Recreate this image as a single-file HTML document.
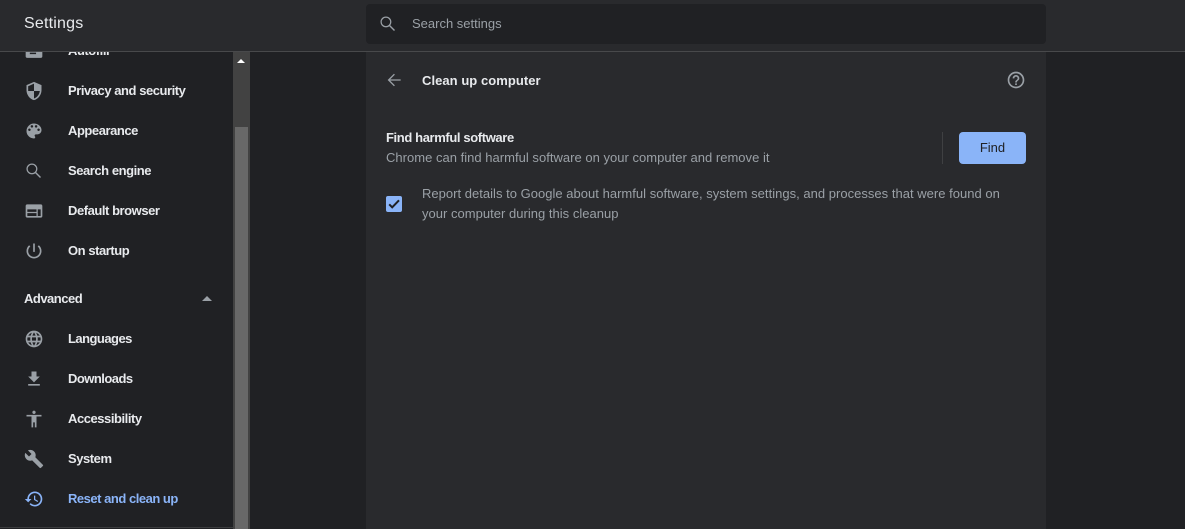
<!DOCTYPE html>
<html><head><meta charset="utf-8">
<style>
*{box-sizing:border-box}
html,body{margin:0;padding:0;width:1185px;height:529px;overflow:hidden;background:#202124;font-family:"Liberation Sans",sans-serif}
.a{position:absolute;white-space:nowrap}
.n{left:68px;font-size:13px;line-height:20px;font-weight:bold;color:#e8eaed;letter-spacing:-.45px}
svg.i{position:absolute;left:24px;width:20px;height:20px;fill:#9aa0a6}
</style></head><body>
<div class="a" style="left:366px;top:52px;width:680px;height:477px;background:#292a2d"></div>

<div class="a n" style="top:41px">Autofill</div>
<svg class="i" style="top:40px" viewBox="0 0 24 24"><path fill-rule="evenodd" d="M20 6h-4V4a2 2 0 0 0-2-2h-4a2 2 0 0 0-2 2v2H4a2 2 0 0 0-2 2v11.500a2 2 0 0 0 2 2h16a2 2 0 0 0 2-2V8a2 2 0 0 0-2-2zm-5.500 11H7v-1.800h7.500V17z"/></svg>

<svg class="i" style="top:81px" viewBox="0 0 24 24"><path d="M12 1L3 5v6c0 5.550 3.840 10.740 9 12 5.160-1.260 9-6.450 9-12V5l-9-4zm0 10.990h7c-.53 4.120-3.280 7.790-7 8.940V12H5V6.300l7-3.110v8.800z"/></svg>
<div class="a n" style="top:81px">Privacy and security</div>
<svg class="i" style="top:121px" viewBox="0 0 24 24"><path d="M12 3a9 9 0 0 0 0 18c.83 0 1.500-.67 1.500-1.500 0-.39-.15-.74-.39-1.010-.23-.26-.38-.61-.38-.99 0-.83.67-1.500 1.500-1.500H16c2.760 0 5-2.240 5-5 0-4.420-4.030-8-9-8zm-5.500 9c-.83 0-1.500-.67-1.500-1.500S5.670 9 6.500 9 8 9.670 8 10.500 7.330 12 6.500 12zm3-4C8.670 8 8 7.330 8 6.500S8.670 5 9.500 5s1.500.67 1.500 1.500S10.330 8 9.500 8zm5 0c-.83 0-1.500-.67-1.500-1.500S13.670 5 14.500 5s1.500.67 1.500 1.500S15.330 8 14.500 8zm3 4c-.83 0-1.500-.67-1.500-1.500S16.670 9 17.500 9s1.500.67 1.500 1.500-.67 1.500-1.500 1.500z"/></svg>
<div class="a n" style="top:121px">Appearance</div>
<svg class="i" style="top:161px;fill:none;stroke:#9aa0a6" viewBox="0 0 24 24"><circle cx="9.500" cy="9.500" r="5.800" stroke-width="1.500"/><path d="M13.800 13.800l6 6" stroke-width="1.700"/></svg>
<div class="a n" style="top:161px">Search engine</div>
<svg class="i" style="top:201px" viewBox="0 0 24 24"><path fill-rule="evenodd" d="M4 4h16a2 2 0 0 1 2 2v12a2 2 0 0 1-2 2H4a2 2 0 0 1-2-2V6a2 2 0 0 1 2-2zm0 6v3h11v-3H4zm0 4.500V18h11v-3.500H4zM16.500 10v8H20v-8h-3.500z"/></svg>
<div class="a n" style="top:201px">Default browser</div>
<svg class="i" style="top:241px" viewBox="0 0 24 24"><path d="M13 3h-2v10h2V3zm4.830 2.170l-1.420 1.420C17.990 7.860 19 9.810 19 12c0 3.870-3.130 7-7 7s-7-3.130-7-7c0-2.190 1.010-4.140 2.580-5.420L6.170 5.170C4.230 6.820 3 9.260 3 12c0 4.970 4.030 9 9 9s9-4.030 9-9c0-2.740-1.230-5.180-3.170-6.830z"/></svg>
<div class="a n" style="top:241px">On startup</div>

<div class="a n" style="left:24px;top:289px;letter-spacing:-.5px">Advanced</div>
<div class="a" style="left:202px;top:296px;width:0;height:0;border-left:5px solid transparent;border-right:5px solid transparent;border-bottom:5px solid #9aa0a6"></div>

<svg class="i" style="top:329px" viewBox="0 0 24 24"><path d="M11.990 2C6.470 2 2 6.480 2 12s4.470 10 9.990 10C17.520 22 22 17.520 22 12S17.520 2 11.990 2zm6.930 6h-2.950c-.32-1.250-.78-2.450-1.380-3.560 1.840.63 3.370 1.910 4.330 3.560zM12 4.040c.83 1.200 1.480 2.530 1.910 3.960h-3.820c.43-1.430 1.080-2.760 1.910-3.960zM4.260 14C4.100 13.360 4 12.690 4 12s.1-1.360.26-2h3.380c-.08.66-.14 1.320-.14 2 0 .68.06 1.340.14 2H4.260zm.82 2h2.950c.32 1.250.78 2.450 1.380 3.560-1.840-.63-3.370-1.900-4.330-3.560zm2.950-8H5.080c.96-1.660 2.490-2.930 4.330-3.560C8.810 5.550 8.350 6.750 8.030 8zM12 19.960c-.83-1.200-1.480-2.530-1.910-3.960h3.820c-.43 1.430-1.080 2.760-1.910 3.960zM14.340 14H9.660c-.09-.66-.16-1.320-.16-2 0-.68.07-1.350.16-2h4.680c.09.65.16 1.320.16 2 0 .68-.07 1.340-.16 2zm.25 5.560c.6-1.110 1.060-2.310 1.380-3.560h2.950c-.96 1.650-2.490 2.930-4.330 3.560zM16.360 14c.08-.66.14-1.320.14-2 0-.68-.06-1.340-.14-2h3.380c.16.64.26 1.310.26 2s-.1 1.360-.26 2h-3.380z"/></svg>
<div class="a n" style="top:329px;letter-spacing:-.53px">Languages</div>
<svg class="i" style="top:369px" viewBox="0 0 24 24"><path d="M19 9h-4V3H9v6H5l7 7 7-7zM5 18v2h14v-2H5z"/></svg>
<div class="a n" style="top:369px;letter-spacing:-.53px">Downloads</div>
<svg class="i" style="top:409px" viewBox="0 0 24 24"><path d="M12 2c1.100 0 2 .9 2 2s-.9 2-2 2-2-.9-2-2 .9-2 2-2zm9 7h-6v13h-2v-6h-2v6H9V9H3V7h18v2z"/></svg>
<div class="a n" style="top:409px">Accessibility</div>
<svg class="i" style="top:449px" viewBox="0 0 24 24"><path d="M22.700 19l-9.100-9.100c.9-2.300.4-5-1.500-6.900-2-2-5-2.400-7.400-1.300L9 6 6 9 1.600 4.700C.4 7.100.9 10.100 2.900 12.100c1.900 1.900 4.600 2.400 6.900 1.500l9.100 9.100c.4.4 1 .4 1.400 0l2.300-2.300c.5-.4.5-1.100.1-1.400z"/></svg>
<div class="a n" style="top:449px">System</div>
<svg class="i" style="top:489px;fill:#8ab4f8" viewBox="0 0 24 24"><path d="M13 3c-4.970 0-9 4.030-9 9H1l3.890 3.890.07.14L9 12H6c0-3.870 3.130-7 7-7s7 3.130 7 7-3.130 7-7 7c-1.930 0-3.680-.79-4.940-2.060l-1.420 1.420C8.270 19.990 10.510 21 13 21c4.970 0 9-4.030 9-9s-4.030-9-9-9zm-1 5v5l4.280 2.540.72-1.210-3.500-2.080V8H12z"/></svg>
<div class="a n" style="top:489px;color:#8ab4f8;letter-spacing:-.48px">Reset and clean up</div>

<div class="a" style="left:0;top:527px;width:233px;height:1px;background:#3c3d3f"></div>
<div class="a" style="left:233px;top:52px;width:17px;height:477px;background:#424242"></div>
<div class="a" style="left:235px;top:127px;width:13px;height:402px;background:#686868"></div>
<div class="a" style="left:237px;top:59px;width:0;height:0;border-left:4px solid transparent;border-right:4px solid transparent;border-bottom:4.500px solid #fff"></div>

<div class="a" style="left:0;top:0;width:1185px;height:52px;background:#292a2d;border-bottom:1px solid #48494b"></div>
<div class="a" style="left:24px;top:14px;font-size:16px;line-height:20px;color:#e8eaed;letter-spacing:.2px">Settings</div>
<div class="a" style="left:366px;top:4px;width:680px;height:40px;background:#202124;border-radius:4px"></div>
<svg class="a" style="left:378px;top:14px;width:20px;height:20px;fill:none;stroke:#9aa0a6" viewBox="0 0 24 24"><circle cx="9.500" cy="9.500" r="5.800" stroke-width="1.500"/><path d="M13.800 13.800l6 6" stroke-width="1.700"/></svg>
<div class="a" style="left:412px;top:14px;font-size:13px;line-height:20px;color:#9aa0a6">Search settings</div>

<svg class="a" style="left:384px;top:70px;width:20px;height:20px;fill:none;stroke:#9aa0a6;stroke-width:1.600" viewBox="0 0 24 24"><path d="M20 12H5.500M12.500 5l-7 7 7 7"/></svg>
<div class="a" style="left:422px;top:71px;font-size:13px;line-height:20px;font-weight:bold;color:#e8eaed;letter-spacing:.05px">Clean up computer</div>
<svg class="a" style="left:1006px;top:70px;width:20px;height:20px;fill:#9aa0a6" viewBox="0 0 24 24"><path d="M11 18h2v-2h-2v2zm1-16C6.480 2 2 6.480 2 12s4.480 10 10 10 10-4.480 10-10S17.520 2 12 2zm0 18c-4.410 0-8-3.590-8-8s3.590-8 8-8 8 3.590 8 8-3.590 8-8 8zm0-14c-2.210 0-4 1.790-4 4h2c0-1.100.9-2 2-2s2 .9 2 2c0 2-3 1.750-3 5h2c0-2.250 3-2.500 3-5 0-2.210-1.790-4-4-4z"/></svg>

<div class="a" style="left:386px;top:128px;font-size:13px;line-height:20px;font-weight:bold;color:#e8eaed;letter-spacing:-.38px">Find harmful software</div>
<div class="a" style="left:386px;top:148px;font-size:13px;line-height:20px;color:#9aa0a6;letter-spacing:.02px">Chrome can find harmful software on your computer and remove it</div>
<div class="a" style="left:942px;top:132px;width:1px;height:32px;background:#3f4042"></div>
<div class="a" style="left:959px;top:132px;width:67px;height:32px;background:#8ab4f8;border-radius:4px;color:#202124;font-size:13px;line-height:32px;text-align:center">Find</div>

<div class="a" style="left:386px;top:196px;width:16px;height:16px;background:#8ab4f8;border-radius:2px"></div>
<svg class="a" style="left:386px;top:196px;width:16px;height:16px" viewBox="0 0 16 16"><path d="M3.200 8.300l3 3 6.800-7" fill="none" stroke="#202124" stroke-width="2"/></svg>
<div class="a" style="left:422px;top:184px;font-size:13px;line-height:20px;color:#9aa0a6;letter-spacing:.02px">Report details to Google about harmful software, system settings, and processes that were found on<br>your computer during this cleanup</div>
</body></html>
